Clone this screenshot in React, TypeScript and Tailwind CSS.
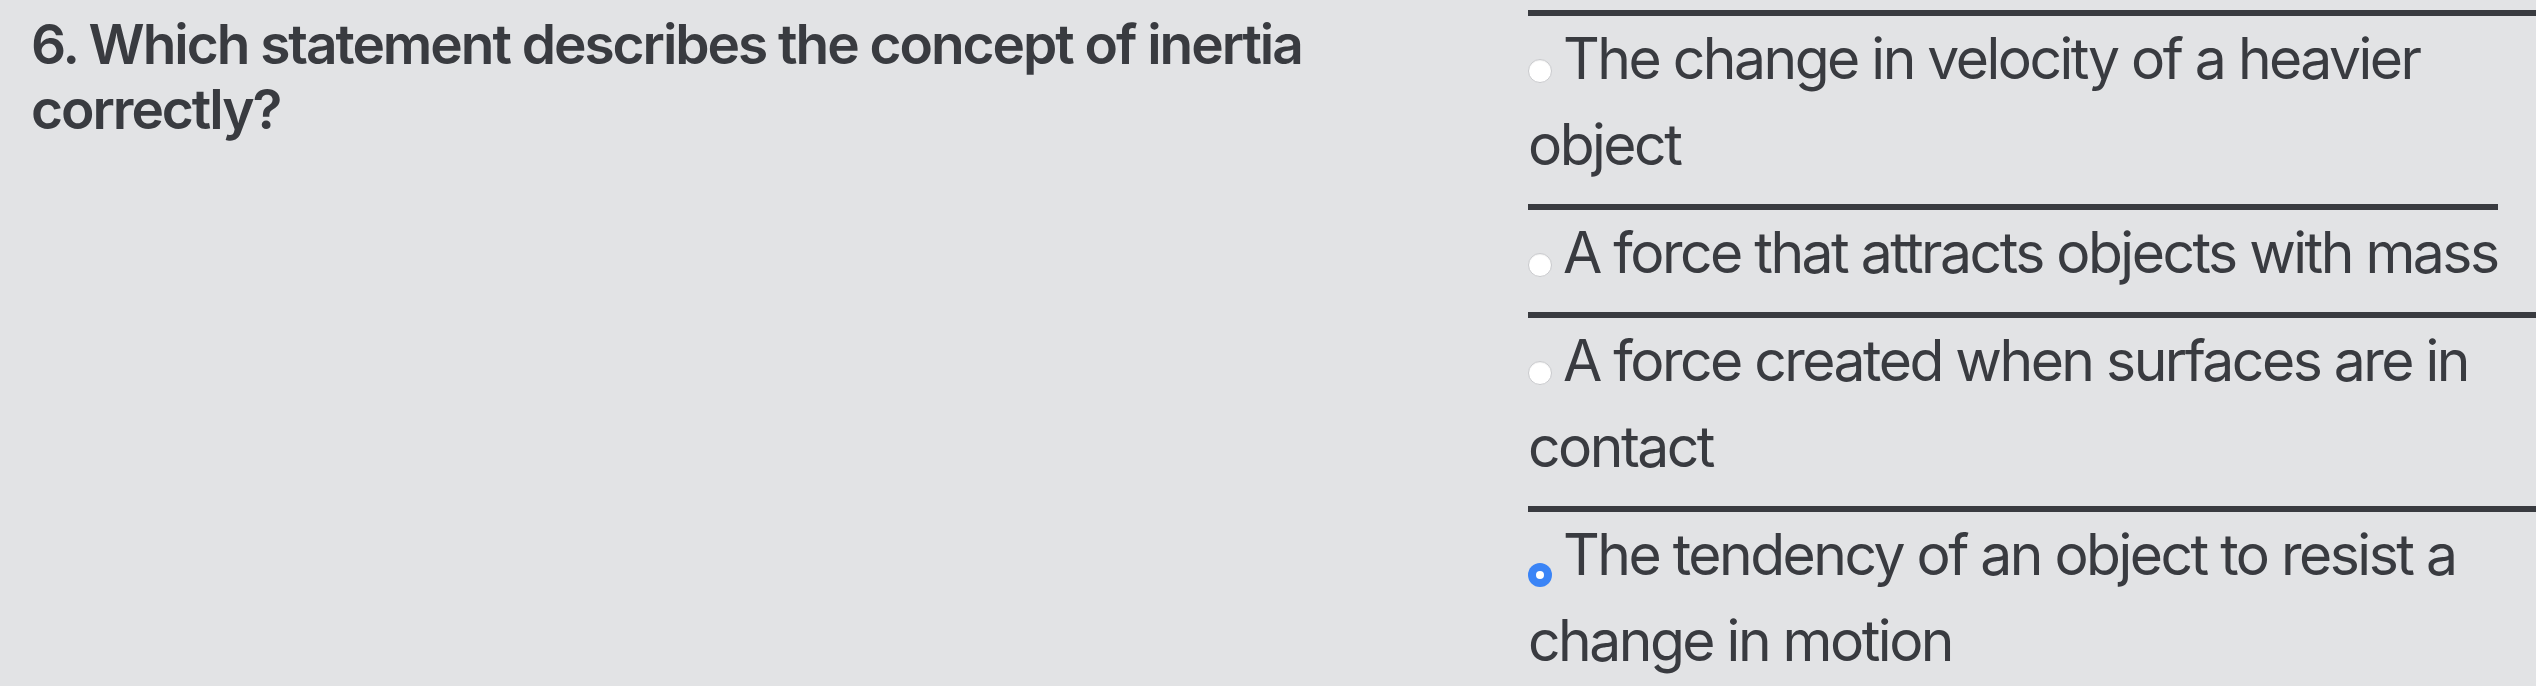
import React from "react";

type Option = {
  id: string;
  text: string;
  checked?: boolean;
};

const options: Option[] = [
  { id: "a", text: "The change in velocity of a heavier object" },
  { id: "b", text: "A force that attracts objects with mass" },
  { id: "c", text: "A force created when surfaces are in contact" },
  { id: "d", text: "The tendency of an object to resist a change in motion", checked: true },
];

const Radio: React.FC<{ checked?: boolean }> = ({ checked }) =>
  checked ? (
    <span className="inline-flex items-center justify-center w-[24px] h-[24px] rounded-full bg-[#3a84f6] mr-[11px] align-[-4px]">
      <span className="w-[8px] h-[8px] rounded-full bg-white" />
    </span>
  ) : (
    <span className="inline-block w-[24px] h-[24px] rounded-full bg-white border border-[#c9cacd] shadow-[inset_0_1px_1px_rgba(0,0,0,0.06)] mr-[11px] align-[-4px]" />
  );

export default function App() {
  return (
    <div
      className="w-[2536px] h-[686px] overflow-hidden bg-[#e2e3e5] text-[#393b40] flex"
      style={{ fontFamily: "Inter, 'Noto Sans', sans-serif" }}
    >
      <div className="w-[1528px] shrink-0 pl-[31px] pr-[200px] pt-[12px]">
        <h2 className="text-[55px] leading-[65px] font-semibold tracking-[-0.037em]">
          6. Which statement describes the concept of inertia correctly?
        </h2>
      </div>

      <div className="flex-1 min-w-0 pt-[10px] flex flex-col items-start">
        {options.map((o) => (
          <label
            key={o.id}
            className="block w-fit max-w-full border-t-[6px] border-[#393b40] mb-[16px] text-[57px] leading-[86px] tracking-[-0.044em]"
          >
            <Radio checked={o.checked} />
            {o.text}
          </label>
        ))}
      </div>
    </div>
  );
}
